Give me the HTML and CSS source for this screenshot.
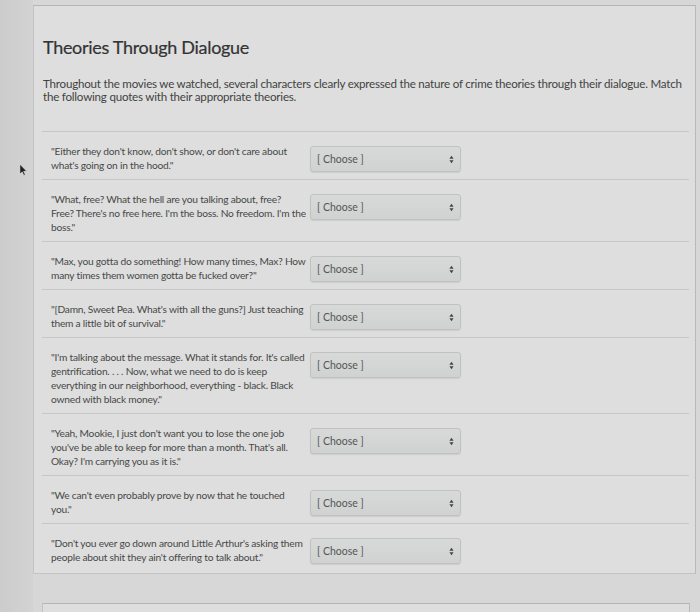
FILE: index.html
```html
<!DOCTYPE html>
<html>
<head>
<meta charset="utf-8">
<link rel="stylesheet" href="styles.css">
</head>
<body>
<div class="page">
  <div class="gutter"></div>
  <main class="main">
    <section class="card">
      <header class="head">
        <h1 class="title">Theories Through Dialogue</h1>
        <p class="intro">Throughout the movies we watched, several characters clearly expressed the nature of crime theories through their dialogue. Match the following quotes with their appropriate theories.</p>
      </header>
      <div class="rows">
        <div class="row">
          <div class="quote">"Either they don't know, don't show, or don't care about what's going on in the hood."</div>
          <div class="sel"><span>[ Choose ]</span><svg class="arr" viewBox="0 0 6 10" width="5" height="9"><path d="M3 0.5 L5.5 4 L0.5 4 Z M3 9.5 L5.5 6 L0.5 6 Z" fill="#444"/></svg></div>
        </div>
        <div class="row">
          <div class="quote">"What, free? What the hell are you talking about, free?<br>Free? There's no free here. I'm the boss. No freedom. I'm the boss."</div>
          <div class="sel"><span>[ Choose ]</span><svg class="arr" viewBox="0 0 6 10" width="5" height="9"><path d="M3 0.5 L5.5 4 L0.5 4 Z M3 9.5 L5.5 6 L0.5 6 Z" fill="#444"/></svg></div>
        </div>
        <div class="row">
          <div class="quote">"Max, you gotta do something! How many times, Max? How many times them women gotta be fucked over?"</div>
          <div class="sel"><span>[ Choose ]</span><svg class="arr" viewBox="0 0 6 10" width="5" height="9"><path d="M3 0.5 L5.5 4 L0.5 4 Z M3 9.5 L5.5 6 L0.5 6 Z" fill="#444"/></svg></div>
        </div>
        <div class="row">
          <div class="quote">"[Damn, Sweet Pea. What's with all the guns?] Just teaching them a little bit of survival."</div>
          <div class="sel"><span>[ Choose ]</span><svg class="arr" viewBox="0 0 6 10" width="5" height="9"><path d="M3 0.5 L5.5 4 L0.5 4 Z M3 9.5 L5.5 6 L0.5 6 Z" fill="#444"/></svg></div>
        </div>
        <div class="row">
          <div class="quote">"I'm talking about the message. What it stands for. It's called gentrification. . . . Now, what we need to do is keep everything in our neighborhood, everything - black. Black owned with black money."</div>
          <div class="sel"><span>[ Choose ]</span><svg class="arr" viewBox="0 0 6 10" width="5" height="9"><path d="M3 0.5 L5.5 4 L0.5 4 Z M3 9.5 L5.5 6 L0.5 6 Z" fill="#444"/></svg></div>
        </div>
        <div class="row">
          <div class="quote">"Yeah, Mookie, I just don't want you to lose the one job you've be able to keep for more than a month. That's all. Okay? I'm carrying you as it is."</div>
          <div class="sel"><span>[ Choose ]</span><svg class="arr" viewBox="0 0 6 10" width="5" height="9"><path d="M3 0.5 L5.5 4 L0.5 4 Z M3 9.5 L5.5 6 L0.5 6 Z" fill="#444"/></svg></div>
        </div>
        <div class="row">
          <div class="quote">"We can't even probably prove by now that he touched<br>you."</div>
          <div class="sel"><span>[ Choose ]</span><svg class="arr" viewBox="0 0 6 10" width="5" height="9"><path d="M3 0.5 L5.5 4 L0.5 4 Z M3 9.5 L5.5 6 L0.5 6 Z" fill="#444"/></svg></div>
        </div>
        <div class="row">
          <div class="quote">"Don't you ever go down around Little Arthur's asking them people about shit they ain't offering to talk about."</div>
          <div class="sel"><span>[ Choose ]</span><svg class="arr" viewBox="0 0 6 10" width="5" height="9"><path d="M3 0.5 L5.5 4 L0.5 4 Z M3 9.5 L5.5 6 L0.5 6 Z" fill="#444"/></svg></div>
        </div>
      </div>
    </section>
    <section class="card next"></section>
  </main>
  <svg class="cursor" viewBox="0 0 10 15" width="9" height="14"><path d="M1 1 L1 12 L3.6 9.6 L5.4 13.6 L7 12.9 L5.2 9 L8.6 9 Z" fill="#222" stroke="#eee" stroke-width="0.6"/></svg>
</div>
</body>
</html>
```

FILE: styles.css
```css
html, body {
  margin: 0;
  padding: 0;
}
body {
  background: #d6d7d6;
  font-family: Lato, "Open Sans", sans-serif;
  color: #484848;
  overflow: hidden;
}
.page {
  position: relative;
  display: flex;
  height: 612px;
}
.gutter {
  width: 33px;
  flex: none;
  background: linear-gradient(90deg, #cbcccb, #d2d3d2);
}
.main {
  flex: 1;
  padding-top: 5px;
  padding-right: 4px;
  display: flex;
  flex-direction: column;
}
.card {
  background: #dddedd;
  border: 1px solid #c2c3c2;
  border-top-color: #b4b5b4;
  border-right-color: #b8b9b8;
  padding-bottom: 2px;
}
.head {
  padding: 30px 0 0 9px;
}
.title {
  margin: 0;
  font-size: 18px;
  line-height: 22px;
  font-weight: 400;
  color: #333;
  letter-spacing: -0.3px;
  -webkit-text-stroke: 0.2px #333;
}
.intro {
  margin: 19px 0 0;
  font-size: 11.6px;
  line-height: 13px;
  color: #434343;
  letter-spacing: -0.22px;
}
.rows {
  margin: 28px 6px 0 8px;
}
.row {
  display: flex;
  align-items: flex-start;
  border-top: 1px solid #c6c7c6;
  padding: 12px 0 7px 9px;
}
.quote {
  width: 259px;
  flex: none;
  font-size: 10.2px;
  line-height: 14px;
  color: #484848;
  letter-spacing: -0.22px;
}
.sel {
  margin-top: 2px;
  width: 151px;
  height: 26px;
  box-sizing: border-box;
  display: flex;
  align-items: center;
  justify-content: space-between;
  padding: 0 6px 0 6px;
  border: 1px solid #c0c1c1;
  border-radius: 3px;
  background: linear-gradient(180deg, #d8d9d9 0%, #d0d1d1 100%);
  box-shadow: 0 1px 1px rgba(0, 0, 0, 0.08);
  font-size: 10.5px;
  color: #555;
}
.arr {
  display: block;
}
.next {
  margin-top: 29px;
  margin-left: 9px;
  margin-right: 6px;
  flex: 1;
  border-bottom: none;
}
.cursor {
  position: absolute;
  left: 19px;
  top: 163px;
}
```
